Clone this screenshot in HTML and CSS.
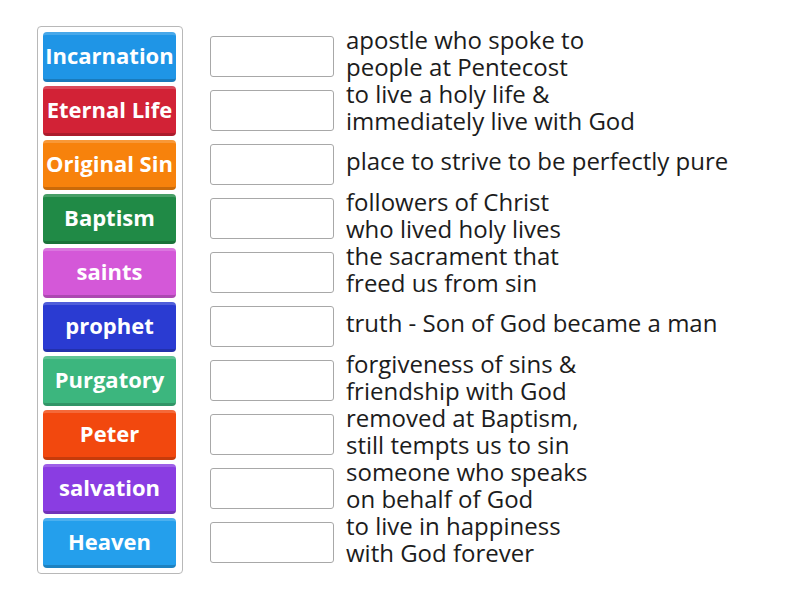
FILE: index.html
```html
<!DOCTYPE html>
<html>
<head>
<meta charset="utf-8">
<link rel="stylesheet" href="styles.css">
</head>
<body>
<div class="page">
  <div class="bank">
    <div class="tile t-blue">Incarnation</div>
    <div class="tile t-red">Eternal Life</div>
    <div class="tile t-orange">Original Sin</div>
    <div class="tile t-green">Baptism</div>
    <div class="tile t-pink">saints</div>
    <div class="tile t-navy">prophet</div>
    <div class="tile t-mint">Purgatory</div>
    <div class="tile t-red2">Peter</div>
    <div class="tile t-purple">salvation</div>
    <div class="tile t-sky">Heaven</div>
  </div>
  <div class="rows">
    <div class="row"><div class="slot"></div><div class="def">apostle who spoke to<br>people at Pentecost</div></div>
    <div class="row"><div class="slot"></div><div class="def">to live a holy life &amp;<br>immediately live with God</div></div>
    <div class="row"><div class="slot"></div><div class="def">place to strive to be perfectly pure</div></div>
    <div class="row"><div class="slot"></div><div class="def">followers of Christ<br>who lived holy lives</div></div>
    <div class="row"><div class="slot"></div><div class="def">the sacrament that<br>freed us from sin</div></div>
    <div class="row"><div class="slot"></div><div class="def">truth - Son of God became a man</div></div>
    <div class="row"><div class="slot"></div><div class="def">forgiveness of sins &amp;<br>friendship with God</div></div>
    <div class="row"><div class="slot"></div><div class="def">removed at Baptism,<br>still tempts us to sin</div></div>
    <div class="row"><div class="slot"></div><div class="def">someone who speaks<br>on behalf of God</div></div>
    <div class="row"><div class="slot"></div><div class="def">to live in happiness<br>with God forever</div></div>
  </div>
</div>
</body>
</html>
```
FILE: styles.css
```css
html, body {
  margin: 0;
  padding: 0;
  background: #ffffff;
}
.page {
  display: flex;
  align-items: flex-start;
  padding: 26px 0 0 37px;
  font-family: "Open Sans", "Liberation Sans", sans-serif;
}
.bank {
  width: 146px;
  box-sizing: border-box;
  border: 1px solid #b8b8b8;
  border-radius: 4px;
  padding: 5px 6px 5px 5px;
  display: flex;
  flex-direction: column;
  gap: 4px;
}
.tile {
  height: 50px;
  box-sizing: border-box;
  border-radius: 4px;
  color: #ffffff;
  font-weight: 700;
  font-size: 22px;
  display: flex;
  align-items: center;
  justify-content: center;
  white-space: nowrap;
  border-top: 3px solid rgba(255,255,255,0.18);
  border-bottom: 3px solid rgba(0,0,0,0.18);
  padding-bottom: 5px;
}
.t-blue { background: #1f95e6; }
.t-red { background: #d22236; }
.t-orange { background: #f7820c; }
.t-green { background: #208a46; }
.t-pink { background: #d458d8; }
.t-navy { background: #2a3bd2; }
.t-mint { background: #3cb67e; }
.t-red2 { background: #f2480e; }
.t-purple { background: #8a3de2; }
.t-sky { background: #249fec; }
.rows {
  display: flex;
  flex-direction: column;
  gap: 13px;
  margin-left: 27px;
  margin-top: 10px;
}
.row {
  display: flex;
  align-items: center;
  height: 41px;
}
.slot {
  width: 124px;
  height: 41px;
  box-sizing: border-box;
  border: 1px solid #a8a8a8;
  border-radius: 3px;
  flex: none;
}
.def {
  margin-left: 12px;
  margin-bottom: 8px;
  font-size: 24px;
  line-height: 27px;
  color: #1c1c1c;
  white-space: nowrap;
}
```
